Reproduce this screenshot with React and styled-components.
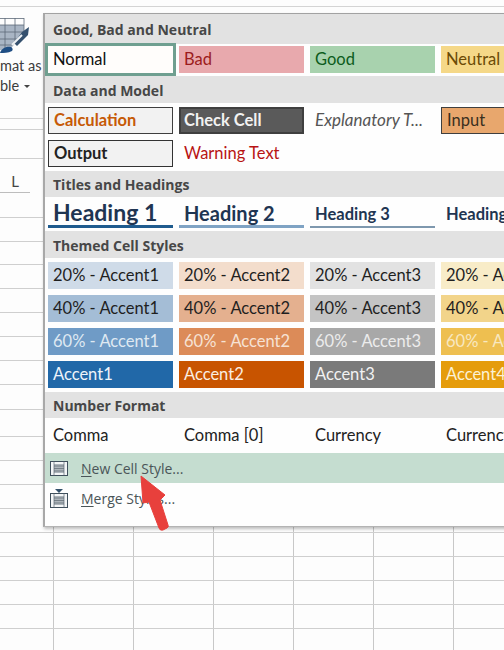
import React from 'react';
import styled, { createGlobalStyle } from 'styled-components';

const GlobalStyle = createGlobalStyle`
html, body {
  margin: 0;
  padding: 0;
  background: #ffffff;
}
`;

const Page = styled.div`
position: relative;
width: 504px;
height: 650px;
overflow: hidden;
background: #fdfdfd;
font-family: "Lato", "Liberation Sans", sans-serif;
`;

const Ribbon = styled.div`
height: 113px;
box-sizing: border-box;
margin-top: 6px;
border-top: 1px solid #d4d4d4;
padding-top: 11px;
border-bottom: 1px solid #d4d4d4;
overflow: hidden;
`;

const RibbonLine = styled.div`
width: 40px;
font-size: 14.5px;
line-height: 20px;
color: #3c3c3c;
white-space: nowrap;
text-align: ${(p) => p.$align};
`;

const RibbonLabel = styled.div`
margin-top: 2px;
`;

const Caret = styled.span`
display: inline-block;
margin-left: 5px;
margin-bottom: 3px;
border-left: 3px solid transparent;
border-right: 3px solid transparent;
border-top: 3px solid #444444;
`;

const SheetBand = styled.div`
height: ${(p) => p.$h}px;
box-sizing: border-box;
border-bottom: 1px solid #d0d0d0;
`;

const ColumnHeader = styled.div`
height: 34px;
box-sizing: border-box;
border-bottom: 1px solid #bdbdbd;
width: 30px;
font-size: 15px;
line-height: 44px;
color: #444444;
text-align: center;
`;

const SheetRow = styled.div`
display: grid;
grid-template-columns: 54px repeat(6, 80px);
height: ${(p) => p.$h}px;
box-sizing: border-box;
border-bottom: 1px solid #cfcfcf;
`;

const SheetCell = styled.div`
border-right: 1px solid #c8c8c8;
`;

const Panel = styled.div`
position: absolute;
left: 43px;
top: 13px;
width: 540px;
height: 514px;
box-sizing: border-box;
background: #fefefe;
border-top: 1px solid #a2a2a2;
border-left: 2px solid #a8a8a8;
border-bottom: 1px solid #b4b4b4;
box-shadow: 1px 2px 3px rgba(0, 0, 0, 0.25);
`;

const SectionHeader = styled.div`
height: ${(p) => p.$h}px;
box-sizing: border-box;
padding-left: 8px;
padding-top: 1px;
background: #e2e2e2;
font-family: "Open Sans", "Liberation Sans", sans-serif;
font-size: 14px;
font-weight: 700;
line-height: ${(p) => p.$h}px;
color: #474747;
white-space: nowrap;
`;

const StyleGrid = styled.div`
display: grid;
grid-template-columns: repeat(4, 125px);
column-gap: 6px;
row-gap: 6px;
padding: ${(p) => p.$top}px 0 ${(p) => p.$bottom}px 3px;
`;

const Swatch = styled.div`
height: 27px;
box-sizing: border-box;
padding-left: 5px;
font-size: ${(p) => (p.$italic ? 17 : 16.5)}px;
line-height: ${(p) => (p.$border ? 24 : 26)}px;
white-space: nowrap;
overflow: hidden;
color: ${(p) => p.$color || '#1f1f1f'};
background: ${(p) => p.$bg || 'transparent'};
border: ${(p) => (p.$border ? `1px solid ${p.$border}` : 'none')};
font-weight: ${(p) => (p.$bold ? 700 : 400)};
font-style: ${(p) => (p.$italic ? 'italic' : 'normal')};
`;

const NormalSwatch = styled(Swatch)`
outline: 3px solid #6f9f90;
outline-offset: 0;
background: #fffdfb;
color: #111111;
`;

const CheckSwatch = styled(Swatch)`
background: #5a5a5a;
border: 2px solid #3f3f3f;
color: #f2f2f2;
font-weight: 700;
line-height: 22px;
padding-left: 3px;
`;

const HeadingSwatch = styled.div`
height: 29px;
box-sizing: border-box;
padding-left: 5px;
border-bottom: ${(p) => p.$line}px solid ${(p) => p.$lineColor};
font-size: ${(p) => p.$size}px;
font-weight: 700;
line-height: ${(p) => p.$lh}px;
color: #1f3552;
white-space: nowrap;
overflow: hidden;
`;

const NumberCell = styled.div`
height: 34px;
padding-left: 5px;
font-size: 16.5px;
line-height: 35px;
color: #222222;
white-space: nowrap;
overflow: hidden;
`;

const MenuItem = styled.div`
display: flex;
align-items: center;
height: ${(p) => p.$h}px;
padding-left: 5px;
gap: 13px;
font-family: "Open Sans", "Liberation Sans", sans-serif;
font-size: 14px;
color: #4a5558;
background: ${(p) => (p.$active ? '#c5ddd0' : 'transparent')};
svg {
  flex-shrink: 0;
}
u {
  text-underline-offset: 2px;
}
`;

const ArrowMark = styled.svg`
position: absolute;
left: 136px;
top: 472px;
width: 40px;
height: 64px;
`;

const TableIcon = () => (
  <svg width="30" height="36" viewBox="0 0 30 36" style={{ display: 'block' }}>
    <path d="M0 7 H24 V13 L10 32 H0 Z" fill="#a9b5c4" />
    <path d="M0 0.5 H24 M0 7 H24 M0 14 H23 M0 21 H18 M0 27 H13 M5 0 V32 M15 0 V26 M24 0 V13" stroke="#5d6a78" strokeWidth="0.8" fill="none" />
    <path d="M0 35 C1 31 6 28 11 29 C13 30 13 32 12 33 C8 35 4 35 0 35 Z" fill="#1f4e84" />
    <path d="M14 25 L17 28 L28 17 L29 9 L22 14 Z" fill="#34506e" />
    <path d="M12 27 L22 17" stroke="#eef1f4" strokeWidth="2" />
  </svg>
);

const NewStyleIcon = ({ merge }) => (
  <svg width="18" height="20" viewBox="0 0 18 20">
    {merge && <path d="M5 0 H13 L9 4 Z" fill="#33506b" />}
    <rect x="0.5" y={merge ? 4.5 : 3.5} width="17" height="14" fill="#f4f6f7" stroke="#3f4f5c" />
    <rect x="4" y={merge ? 7 : 6} width="10" height="9" fill="#aeb5bb" />
    <path d={merge ? 'M4 9 H14 M4 11.5 H14 M4 14 H14 M4 4.5 V18.5 M14 4.5 V18.5' : 'M4 8 H14 M4 10.5 H14 M4 13 H14 M4 3.5 V17.5 M14 3.5 V17.5'} stroke="#5d6972" strokeWidth="0.7" fill="none" />
  </svg>
);

const sheetRows = [25, 24, 23, 24, 24, 24, 24, 24, 25, 27, 24, 24, 24, 24, 24, 24, 24, 24, 24];

const themed = [
  [['20% - Accent1', '#cfdbe8'], ['20% - Accent2', '#f3ddcc'], ['20% - Accent3', '#e2e2e2'], ['20% - Accent4', '#f8ecc8']],
  [['40% - Accent1', '#a4bdd6'], ['40% - Accent2', '#e4b08f'], ['40% - Accent3', '#c4c4c4'], ['40% - Accent4', '#f2d48a']],
  [['60% - Accent1', '#6f9bc6', '#dfe9f2'], ['60% - Accent2', '#dc8b58', '#f6e2d4'], ['60% - Accent3', '#a8a8a8', '#ececec'], ['60% - Accent4', '#eebf50', '#f8e8c0']],
  [['Accent1', '#2168a8', '#eef4fa'], ['Accent2', '#c85400', '#fbeee2'], ['Accent3', '#7a7a7a', '#f2f2f2'], ['Accent4', '#e59c0c', '#fcf2d4']],
];

const App = () => {
  return (
    <>
      <GlobalStyle />
      <Page>
        <Ribbon>
          <TableIcon />
          <RibbonLabel>
            <RibbonLine $align="right">mat as</RibbonLine>
            <RibbonLine $align="left">ble<Caret /></RibbonLine>
          </RibbonLabel>
        </Ribbon>
        <SheetBand $h={11} />
        <SheetBand $h={29} />
        <ColumnHeader>L</ColumnHeader>
        {sheetRows.map((h, i) => (
          <SheetRow key={i} $h={h}>
            {Array.from({ length: 7 }).map((_, j) => (
              <SheetCell key={j} />
            ))}
          </SheetRow>
        ))}

        <Panel>
          <SectionHeader $h={30}>Good, Bad and Neutral</SectionHeader>
          <StyleGrid $top={2} $bottom={3}>
            <NormalSwatch>Normal</NormalSwatch>
            <Swatch $bg="#e8a9ad" $color="#9c1c1c">Bad</Swatch>
            <Swatch $bg="#a8d2ae" $color="#0c5c1c">Good</Swatch>
            <Swatch $bg="#f5d888" $color="#6b4a05">Neutral</Swatch>
          </StyleGrid>
          <SectionHeader $h={27}>Data and Model</SectionHeader>
          <StyleGrid $top={4} $bottom={4}>
            <Swatch $bg="#f2f2f2" $border="#3f3f3f" $color="#c65a06" $bold>Calculation</Swatch>
            <CheckSwatch>Check Cell</CheckSwatch>
            <Swatch $color="#555555" $italic>Explanatory T...</Swatch>
            <Swatch $bg="#e8a76d" $border="#3f3f3f" $color="#3a3020">Input</Swatch>
            <Swatch $bg="#f2f2f2" $border="#333333" $color="#222222" $bold>Output</Swatch>
            <Swatch $color="#b81414">Warning Text</Swatch>
          </StyleGrid>
          <SectionHeader $h={26}>Titles and Headings</SectionHeader>
          <StyleGrid $top={2} $bottom={3}>
            <HeadingSwatch $size={23} $lh={26} $line={3} $lineColor="#1f5b8e">Heading 1</HeadingSwatch>
            <HeadingSwatch $size={20} $lh={28} $line={3} $lineColor="#7fa3c4">Heading 2</HeadingSwatch>
            <HeadingSwatch $size={16.5} $lh={30} $line={2} $lineColor="#7e98ae">Heading 3</HeadingSwatch>
            <HeadingSwatch $size={16.5} $lh={30} $line={0} $lineColor="transparent">Heading 4</HeadingSwatch>
          </StyleGrid>
          <SectionHeader $h={27}>Themed Cell Styles</SectionHeader>
          <StyleGrid $top={4} $bottom={4}>
            {themed.flat().map(([label, bg, color]) => (
              <Swatch key={label} $bg={bg} $color={color}>{label}</Swatch>
            ))}
          </StyleGrid>
          <SectionHeader $h={26}>Number Format</SectionHeader>
          <StyleGrid $top={0} $bottom={1}>
            <NumberCell>Comma</NumberCell>
            <NumberCell>Comma [0]</NumberCell>
            <NumberCell>Currency</NumberCell>
            <NumberCell>Currency [0]</NumberCell>
          </StyleGrid>
          <MenuItem $h={30} $active>
            <NewStyleIcon />
            <span><u>N</u>ew Cell Style...</span>
          </MenuItem>
          <MenuItem $h={31}>
            <NewStyleIcon merge />
            <span><u>M</u>erge Styles...</span>
          </MenuItem>
        </Panel>

        <ArrowMark viewBox="0 0 40 64">
          <path d="M5 4 L7 31 L13 30 L23 56 Q24 59 27 58 L31 56 Q33 55 32 53 L24 28 L29 23 Z" fill="#e8403c" stroke="#e8403c" strokeWidth="1" strokeLinejoin="round" />
        </ArrowMark>
      </Page>
    </>
  );
};

export default App;
